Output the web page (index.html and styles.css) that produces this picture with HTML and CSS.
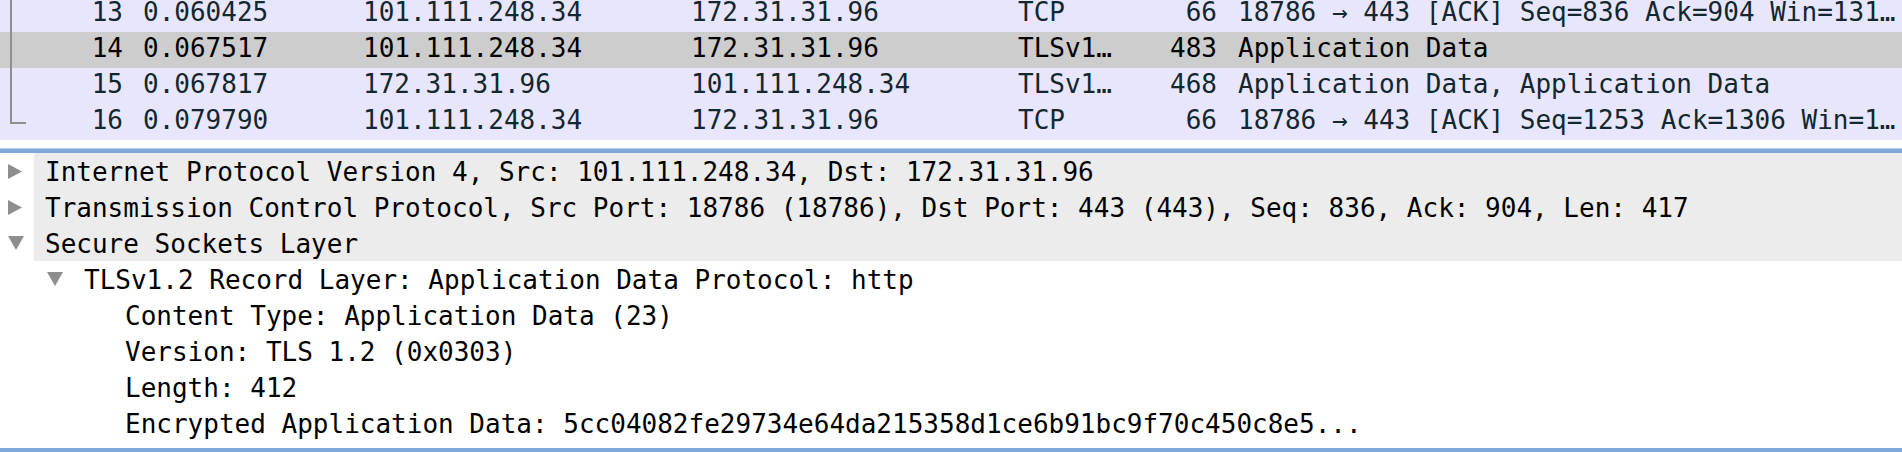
FILE: index.html
```html
<!DOCTYPE html>
<html lang="en">
<head>
<meta charset="utf-8">
<title>Packet detail</title>
<link rel="stylesheet" href="styles.css">
</head>
<body>
<div class="app">
  <section class="packet-pane">
    <div class="packet-rows">
      <div class="pkt pkt-tcp">
        <div class="cell no rel-mid">13</div>
        <div class="cell">0.060425</div>
        <div class="cell">101.111.248.34</div>
        <div class="cell">172.31.31.96</div>
        <div class="cell">TCP</div>
        <div class="cell len">66</div>
        <div class="cell info">18786 → 443 [ACK] Seq=836 Ack=904 Win=131072 Len=0</div>
      </div>
      <div class="pkt pkt-selected">
        <div class="cell no rel-mid">14</div>
        <div class="cell">0.067517</div>
        <div class="cell">101.111.248.34</div>
        <div class="cell">172.31.31.96</div>
        <div class="cell">TLSv1.2</div>
        <div class="cell len">483</div>
        <div class="cell info">Application Data</div>
      </div>
      <div class="pkt pkt-tcp">
        <div class="cell no rel-mid">15</div>
        <div class="cell">0.067817</div>
        <div class="cell">172.31.31.96</div>
        <div class="cell">101.111.248.34</div>
        <div class="cell">TLSv1.2</div>
        <div class="cell len">468</div>
        <div class="cell info">Application Data, Application Data</div>
      </div>
      <div class="pkt pkt-tcp">
        <div class="cell no rel-last">16</div>
        <div class="cell">0.079790</div>
        <div class="cell">101.111.248.34</div>
        <div class="cell">172.31.31.96</div>
        <div class="cell">TCP</div>
        <div class="cell len">66</div>
        <div class="cell info">18786 → 443 [ACK] Seq=1253 Ack=1306 Win=131072 Len=0</div>
      </div>
    </div>
  </section>

  <section class="detail-pane">
    <div class="node lvl0 hl">
      <span class="toggle"><svg class="tri" width="14" height="15" viewBox="0 0 14 15"><polygon points="0,0 14,7.5 0,15"/></svg></span>
      <span class="label">Internet Protocol Version 4, Src: 101.111.248.34, Dst: 172.31.31.96</span>
    </div>
    <div class="node lvl0 hl">
      <span class="toggle"><svg class="tri" width="14" height="15" viewBox="0 0 14 15"><polygon points="0,0 14,7.5 0,15"/></svg></span>
      <span class="label">Transmission Control Protocol, Src Port: 18786 (18786), Dst Port: 443 (443), Seq: 836, Ack: 904, Len: 417</span>
    </div>
    <div class="node lvl0 hl">
      <span class="toggle"><svg class="tri" width="16" height="14" viewBox="0 0 16 14"><polygon points="0,0 16,0 8,14"/></svg></span>
      <span class="label">Secure Sockets Layer</span>
    </div>
    <div class="node lvl1">
      <span class="toggle"><svg class="tri" width="16" height="14" viewBox="0 0 16 14"><polygon points="0,0 16,0 8,14"/></svg></span>
      <span class="label">TLSv1.2 Record Layer: Application Data Protocol: http</span>
    </div>
    <div class="node lvl2">
      <span class="toggle"></span>
      <span class="label">Content Type: Application Data (23)</span>
    </div>
    <div class="node lvl2">
      <span class="toggle"></span>
      <span class="label">Version: TLS 1.2 (0x0303)</span>
    </div>
    <div class="node lvl2">
      <span class="toggle"></span>
      <span class="label">Length: 412</span>
    </div>
    <div class="node lvl2">
      <span class="toggle"></span>
      <span class="label">Encrypted Application Data: 5cc04082fe29734e64da215358d1ce6b91bc9f70c450c8e5...</span>
    </div>
  </section>
</div>
</body>
</html>
```

FILE: styles.css
```css
html, body {
  margin: 0;
  padding: 0;
  background: #ffffff;
}

body {
  width: 1902px;
  height: 452px;
  overflow: hidden;
  font-family: "DejaVu Sans Mono", "Liberation Mono", monospace;
  font-size: 26px;
}

.app {
  display: flex;
  flex-direction: column;
  height: 452px;
}

/* ---------- packet list ---------- */
.packet-pane {
  height: 149px;
  flex: 0 0 auto;
  background: #ffffff;
  border-bottom: 4px solid #80a9db;
  box-shadow: inset 0 -1px 0 #b9d0ec;
}

.packet-rows {
  height: 140px;
  overflow: hidden;
  display: flex;
  flex-direction: column;
  justify-content: flex-end;
}

.pkt {
  flex: 0 0 36px;
  display: grid;
  grid-template-columns: 133px 220px 328px 327px 122px 97px 1fr;
  color: #12272e;
  line-height: 31px;
  padding-top: 1px;
  padding-bottom: 4px;
  box-sizing: border-box;
  height: 36px;
}

.pkt-tcp {
  background: #e7e6fd;
}

.pkt-selected {
  background: #cdcdcd;
  color: #000000;
}

.cell {
  padding: 0 10px;
  white-space: nowrap;
  overflow: hidden;
  text-overflow: ellipsis;
  min-width: 0;
}

.cell.no,
.cell.len {
  text-align: right;
}

.cell.info {
  padding-left: 11px;
  padding-right: 0;
}

/* related-packet indicator */
.cell.no {
  position: relative;
  overflow: visible;
}

.rel-mid::before {
  content: "";
  position: absolute;
  left: 10px;
  top: -1px;
  height: 36px;
  width: 2px;
  background: #8f8f8f;
}

.rel-last::before {
  content: "";
  position: absolute;
  left: 10px;
  top: -1px;
  height: 20px;
  width: 16px;
  border-left: 2px solid #8f8f8f;
  border-bottom: 2px solid #8f8f8f;
  box-sizing: border-box;
}

/* ---------- packet details ---------- */
.detail-pane {
  flex: 0 0 auto;
  display: flex;
  flex-direction: column;
  height: 299px;
  border-bottom: 4px solid #80a9db;
  box-sizing: border-box;
  color: #000000;
}

.node {
  display: flex;
  align-items: center;
  height: 36px;
  flex: 0 0 36px;
}

.node.lvl0 { padding-left: 8px; }
.node.lvl1 { padding-left: 47px; }
.node.lvl2 { padding-left: 88px; }

.toggle {
  flex: 0 0 26px;
  height: 36px;
  display: flex;
  align-items: center;
}

.tri {
  display: block;
  fill: #8e8e8e;
}

.label {
  flex: 1 1 auto;
  padding-left: 11px;
  line-height: 34px;
  padding-top: 2px;
  white-space: nowrap;
}

.node.hl .label {
  background: #ececec;
}
```
